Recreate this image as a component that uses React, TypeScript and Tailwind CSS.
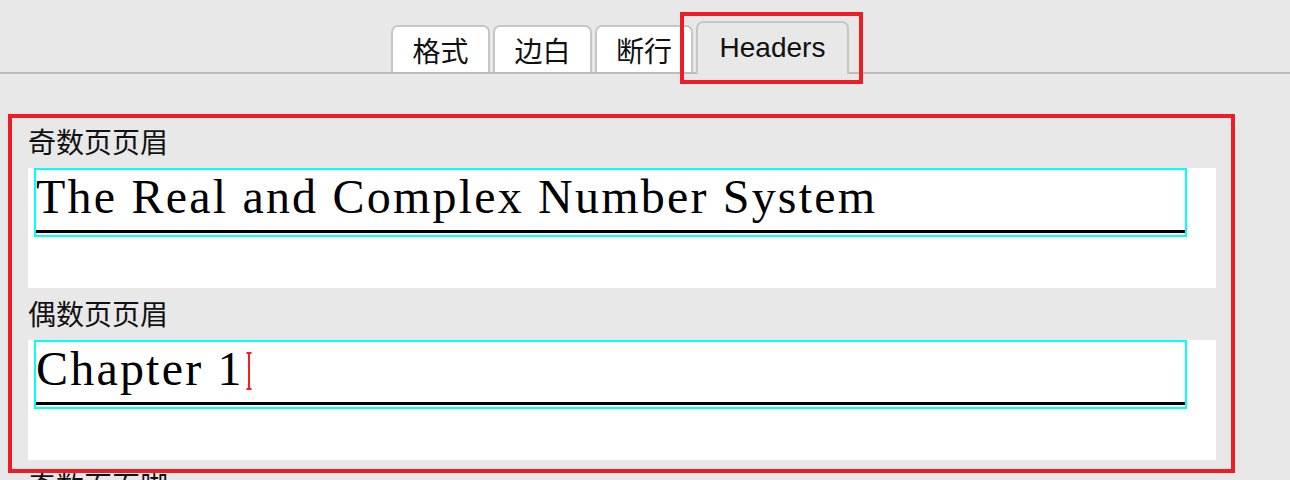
import React from "react";

const cjk = "font-['Noto_Sans_CJK_SC','Noto_Sans',sans-serif]";

const tabs = [
  { label: "格式", w: "w-[99px]" },
  { label: "边白", w: "w-[99px]" },
  { label: "断行", w: "w-[98px]" },
];

function HeaderField({ label, text, caret }: { label: string; text: string; caret?: boolean }) {
  return (
    <div className="flex flex-col">
      <div className={`${cjk} text-[28px] leading-[34px] text-[#111]`}>{label}</div>
      <div className="mt-[10px] h-[120px] w-[1188px] bg-white">
        <div className="ml-[6px] w-[1153px] border-2 border-[#00ffff] bg-white">
          <div className="h-[60px] whitespace-nowrap font-['Liberation_Serif',serif] text-[48px] leading-[53px] tracking-[2.2px] text-black">
            {text}
            {caret && (
              <svg
                width="8"
                height="38"
                viewBox="0 0 8 38"
                className="ml-[1px] inline-block align-[-5px]"
              >
                <path d="M4 1v36M1.5 1h5M1.5 37h5" stroke="#ff1a1a" strokeWidth="2" fill="none" />
              </svg>
            )}
          </div>
          <div className="h-[3px] bg-black" />
          <div className="h-[2px]" />
        </div>
      </div>
    </div>
  );
}

export default function App() {
  return (
    <div className="relative h-[480px] w-full overflow-hidden bg-[#e8e8e8]">
      <div className="flex h-[74px] items-end gap-[3px] border-b-2 border-[#bdbdbd] pl-[391px]">
        {tabs.map((t) => (
          <div
            key={t.label}
            className={`${t.w} ${cjk} flex h-[47px] items-center justify-center rounded-t-[7px] border-2 border-b-0 border-[#c6c6c6] bg-white text-[28px] text-[#111]`}
          >
            {t.label}
          </div>
        ))}
        <div className="-mb-[2px] flex h-[53px] w-[153px] items-center justify-center rounded-t-[7px] border-2 border-b-0 border-[#c6c6c6] bg-[#e8e8e8] pb-[2px] font-['Liberation_Sans',sans-serif] text-[28px] text-[#111]">
          Headers
        </div>
      </div>

      <div className="flex flex-col gap-[8px] pl-[28px] pt-[50px]">
        <HeaderField label="奇数页页眉" text="The Real and Complex Number System" />
        <HeaderField label="偶数页页眉" text="Chapter 1" caret />
        <HeaderField label="奇数页页脚" text="" />
      </div>

      {/* annotation boxes */}
      <div className="pointer-events-none absolute left-[680px] top-[12px] h-[72px] w-[183px] border-4 border-[#ee1c25]" />
      <div className="pointer-events-none absolute left-[8px] top-[114px] h-[359px] w-[1227px] border-4 border-[#ee1c25]" />
    </div>
  );
}
